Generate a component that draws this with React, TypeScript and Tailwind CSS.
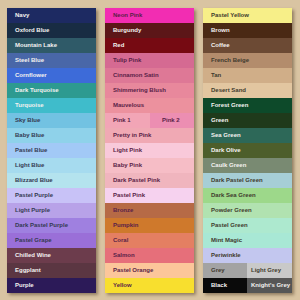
import React from "react";

type Cell = { n: string; bg: string; light?: boolean };
type Row = Cell[];

const W = "text-[#f4f2f0]";

const col1: Row[] = [
  [{ n: "Navy", bg: "bg-[#1d2a62]", light: true }],
  [{ n: "Oxford Blue", bg: "bg-[#182c43]", light: true }],
  [{ n: "Mountain Lake", bg: "bg-[#2f5a68]", light: true }],
  [{ n: "Steel Blue", bg: "bg-[#4967a8]", light: true }],
  [{ n: "Cornflower", bg: "bg-[#3d6bd9]", light: true }],
  [{ n: "Dark Turquoise", bg: "bg-[#2d9a90]", light: true }],
  [{ n: "Turquoise", bg: "bg-[#3fbccb]", light: true }],
  [{ n: "Sky Blue", bg: "bg-[#72c2e2]" }],
  [{ n: "Baby Blue", bg: "bg-[#8fd2ea]" }],
  [{ n: "Pastel Blue", bg: "bg-[#a2c9f6]" }],
  [{ n: "Light Blue", bg: "bg-[#a6dbef]" }],
  [{ n: "Blizzard Blue", bg: "bg-[#b4e3ee]" }],
  [{ n: "Pastel Purple", bg: "bg-[#c8c2f7]" }],
  [{ n: "Light Purple", bg: "bg-[#b8a2e8]" }],
  [{ n: "Dark Pastel Purple", bg: "bg-[#9f80e0]" }],
  [{ n: "Pastel Grape", bg: "bg-[#9a6fd8]" }],
  [{ n: "Chilled Wine", bg: "bg-[#6c3c4c]", light: true }],
  [{ n: "Eggplant", bg: "bg-[#5b3642]", light: true }],
  [{ n: "Purple", bg: "bg-[#2c1a58]", light: true }],
];

const col2: Row[] = [
  [{ n: "Neon Pink", bg: "bg-[#f22db2]" }],
  [{ n: "Burgundy", bg: "bg-[#5c1618]", light: true }],
  [{ n: "Red", bg: "bg-[#760a12]", light: true }],
  [{ n: "Tulip Pink", bg: "bg-[#d56a92]" }],
  [{ n: "Cinnamon Satin", bg: "bg-[#de7896]" }],
  [{ n: "Shimmering Blush", bg: "bg-[#e8889c]" }],
  [{ n: "Mauvelous", bg: "bg-[#ec919e]" }],
  [
    { n: "Pink 1", bg: "bg-[#f2a5b6]" },
    { n: "Pink 2", bg: "bg-[#ec8eb2]" },
  ],
  [{ n: "Pretty in Pink", bg: "bg-[#f0a9b4]" }],
  [{ n: "Light Pink", bg: "bg-[#f9c9da]" }],
  [{ n: "Baby Pink", bg: "bg-[#f6bdc6]" }],
  [{ n: "Dark Pastel Pink", bg: "bg-[#f0b5be]" }],
  [{ n: "Pastel Pink", bg: "bg-[#f6d2ef]" }],
  [{ n: "Bronze", bg: "bg-[#b66a46]" }],
  [{ n: "Pumpkin", bg: "bg-[#cf792c]" }],
  [{ n: "Coral", bg: "bg-[#e47f62]" }],
  [{ n: "Salmon", bg: "bg-[#e66f7a]" }],
  [{ n: "Pastel Orange", bg: "bg-[#fcc69a]" }],
  [{ n: "Yellow", bg: "bg-[#f8df2e]" }],
];

const col3: Row[] = [
  [{ n: "Pastel Yellow", bg: "bg-[#f7ef88]" }],
  [{ n: "Brown", bg: "bg-[#4a2914]", light: true }],
  [{ n: "Coffee", bg: "bg-[#6c4a34]", light: true }],
  [{ n: "French Beige", bg: "bg-[#b38c6c]" }],
  [{ n: "Tan", bg: "bg-[#d0ae88]" }],
  [{ n: "Desert Sand", bg: "bg-[#e2c6a0]" }],
  [{ n: "Forest Green", bg: "bg-[#0d4a2a]", light: true }],
  [{ n: "Green", bg: "bg-[#1f3a1b]", light: true }],
  [{ n: "Sea Green", bg: "bg-[#2d6858]", light: true }],
  [{ n: "Dark Olive", bg: "bg-[#4d5e2b]", light: true }],
  [{ n: "Caulk Green", bg: "bg-[#798a72]", light: true }],
  [{ n: "Dark Pastel Green", bg: "bg-[#a6ced6]" }],
  [{ n: "Dark Sea Green", bg: "bg-[#9dd88a]" }],
  [{ n: "Powder Green", bg: "bg-[#b1e2b0]" }],
  [{ n: "Pastel Green", bg: "bg-[#ade9cf]" }],
  [{ n: "Mint Magic", bg: "bg-[#a8e8d5]" }],
  [{ n: "Periwinkle", bg: "bg-[#c3c7ef]" }],
  [
    { n: "Grey", bg: "bg-[#a3a3a3]" },
    { n: "Light Grey", bg: "bg-[#c9c9c9]" },
  ],
  [
    { n: "Black", bg: "bg-[#0a0a0a]", light: true },
    { n: "Knight's Grey", bg: "bg-[#565656]", light: true },
  ],
];

function Column({
  rows,
  dark,
  splitW,
  secondPad,
}: {
  rows: Row[];
  dark: string;
  splitW: string;
  secondPad: string;
}) {
  return (
    <div className="flex w-[89px] flex-col shadow-[2px_2px_3px_rgba(60,40,20,0.45)]">
      {rows.map((r, i) => (
        <div key={i} className="flex h-[15px]">
          {r.map((c, j) => (
            <div
              key={j}
              className={`${c.bg} ${c.light ? W : dark} ${
                r.length > 1 && j === 0 ? splitW : "flex-1"
              } ${j === 1 ? secondPad : "pl-[8px]"} h-[15px] overflow-hidden whitespace-nowrap text-[6px] font-bold leading-[15px]`}
            >
              {c.n}
            </div>
          ))}
        </div>
      ))}
    </div>
  );
}

export default function App() {
  return (
    <div
      className="h-[300px] w-[300px] bg-[#d9c4a2] pl-[7px] pt-[8px]"
      style={{ fontFamily: '"Liberation Sans", Arial, sans-serif' }}
    >
      <div className="flex gap-[9px]">
        <Column rows={col1} dark="text-[#343a52]" splitW="w-[45px]" secondPad="pl-[12px]" />
        <Column rows={col2} dark="text-[#5a1f48]" splitW="w-[45px]" secondPad="pl-[12px]" />
        <Column rows={col3} dark="text-[#3f3a2e]" splitW="w-[44px]" secondPad="pl-[4px]" />
      </div>
    </div>
  );
}
